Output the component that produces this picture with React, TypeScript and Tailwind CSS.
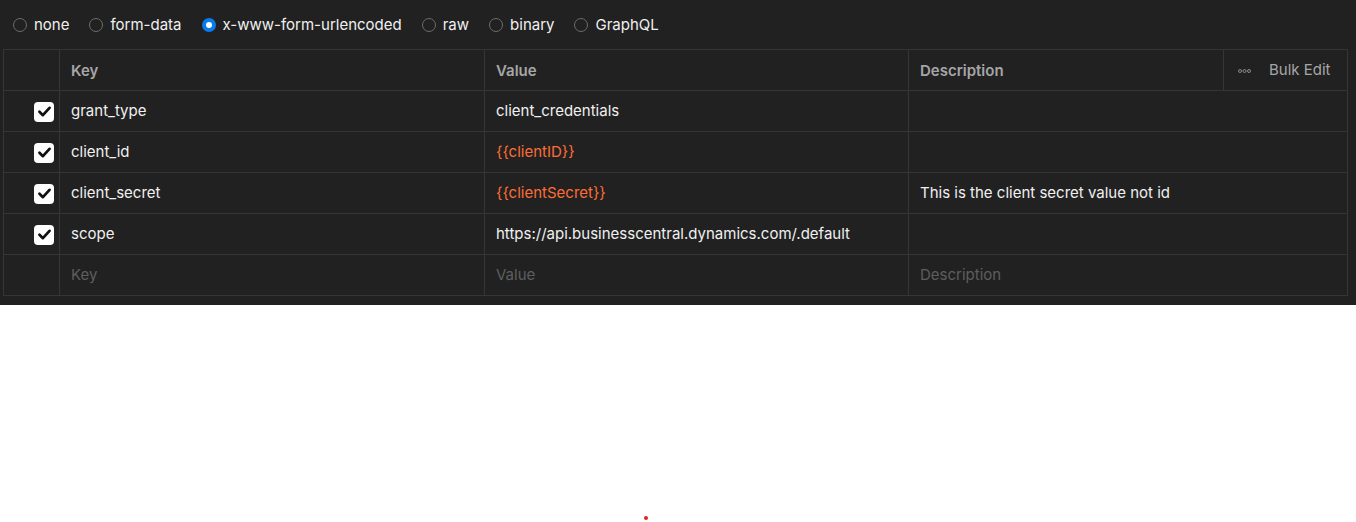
import React from 'react';

type Row = {
    key: string;
    value: string;
    description?: string;
    isVar?: boolean;
};

const bodyModes = ['none', 'form-data', 'x-www-form-urlencoded', 'raw', 'binary', 'GraphQL'];

const rows: Row[] = [
    { key: 'grant_type', value: 'client_credentials' },
    { key: 'client_id', value: '{{clientID}}', isVar: true },
    { key: 'client_secret', value: '{{clientSecret}}', isVar: true, description: 'This is the client secret value not id' },
    { key: 'scope', value: 'https://api.businesscentral.dynamics.com/.default' },
];

function Radio({ label, checked }: { label: string; checked?: boolean }) {
    return (
        <label className="flex items-center gap-[7px] cursor-pointer">
            {checked ? (
                <span className="w-[14px] h-[14px] rounded-full bg-[#097bed] flex items-center justify-center">
                    <span className="w-[6px] h-[6px] rounded-full bg-white" />
                </span>
            ) : (
                <span className="w-[14px] h-[14px] rounded-full border border-[#6b6b6b]" />
            )}
            <span className="text-[15px] text-[#f0f0f0]">{label}</span>
        </label>
    );
}

function Check() {
    return (
        <span className="w-[20px] h-[20px] rounded-[4px] bg-white flex items-center justify-center">
            <svg width="15" height="15" viewBox="0 0 14 14" fill="none">
                <path d="M2.3 7.3 L5.5 10.4 L11.7 3.6" stroke="#111" strokeWidth="2.6" strokeLinecap="round" strokeLinejoin="round" />
            </svg>
        </span>
    );
}

const cell = 'h-[41px] flex items-center px-[11px] pt-[1px] border-r border-b border-[#353535] text-[15px]';
const head = 'h-[41px] flex items-center px-[11px] pt-[3px] border-r border-b border-[#353535] text-[15px] font-semibold text-[#a6a6a6]';

export default function App() {
    return (
        <div className="w-[1356px] h-[522px] bg-white relative" style={{ fontFamily: 'Inter, "Noto Sans", sans-serif' }}>
            <div className="bg-[#212121] pb-[9px]">
                <div className="flex items-center gap-[20px] h-[49px] pl-[13px] pt-[1px]">
                    {bodyModes.map((m) => (
                        <Radio key={m} label={m} checked={m === 'x-www-form-urlencoded'} />
                    ))}
                </div>

                <div className="ml-[3px] w-[1345px] border-l border-t border-[#353535] grid grid-cols-[56px_425px_424px_1fr]">
                    <div className={head} />
                    <div className={head}>Key</div>
                    <div className={head}>Value</div>
                    <div className="h-[41px] flex border-r border-b border-[#353535] text-[15px]">
                        <div className="flex-1 flex items-center px-[11px] pt-[3px] font-semibold text-[#a6a6a6]">Description</div>
                        <div className="w-[124px] flex items-center gap-[18px] pl-[14px] pt-[1px] border-l border-[#353535] text-[#a6a6a6]">
                            <svg width="13" height="4" viewBox="0 0 13 4" fill="none">
                                <circle cx="2" cy="2" r="1.5" stroke="#8a8a8a" strokeWidth="1" />
                                <circle cx="6.5" cy="2" r="1.5" stroke="#8a8a8a" strokeWidth="1" />
                                <circle cx="11" cy="2" r="1.5" stroke="#8a8a8a" strokeWidth="1" />
                            </svg>
                            <span>Bulk Edit</span>
                        </div>
                    </div>

                    {rows.map((r) => (
                        <React.Fragment key={r.key}>
                            <div className={`${cell} justify-end pr-[5px]`}>
                                <Check />
                            </div>
                            <div className={`${cell} text-[#f0f0f0]`}>{r.key}</div>
                            <div className={`${cell} ${r.isVar ? 'text-[#ff6c37]' : 'text-[#f0f0f0]'}`}>{r.value}</div>
                            <div className={`${cell} text-[#f0f0f0]`}>{r.description}</div>
                        </React.Fragment>
                    ))}

                    <div className={cell} />
                    <div className={`${cell} text-[#5e5e5e]`}>Key</div>
                    <div className={`${cell} text-[#5e5e5e]`}>Value</div>
                    <div className={`${cell} text-[#5e5e5e]`}>Description</div>
                </div>
            </div>

            <span className="absolute left-[644px] top-[516px] w-[4px] h-[4px] rounded-full bg-[#e0241b]" />
        </div>
    );
}
